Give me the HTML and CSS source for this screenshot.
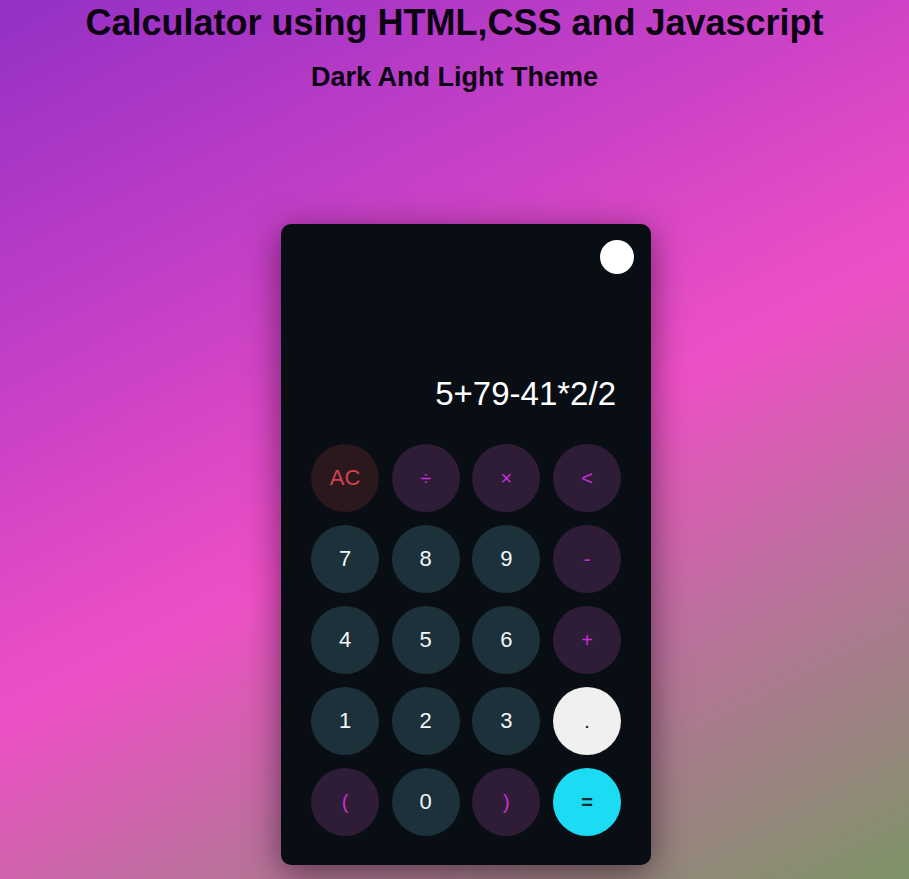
FILE: index.html
```html
<!DOCTYPE html>
<html lang="en">
<head>
<meta charset="UTF-8">
<title>Calculator</title>
<link rel="stylesheet" href="styles.css">
</head>
<body>
<h1 class="title">Calculator using HTML,CSS and Javascript</h1>
<h2 class="subtitle">Dark And Light Theme</h2>
<div class="stage">
  <div class="calc">
    <div class="top">
      <div class="toggle"></div>
    </div>
    <div class="display">5+79-41*2/2</div>
    <div class="keys">
      <div class="key clear">AC</div>
      <div class="key op">÷</div>
      <div class="key op">×</div>
      <div class="key op">&lt;</div>
      <div class="key num">7</div>
      <div class="key num">8</div>
      <div class="key num">9</div>
      <div class="key op">-</div>
      <div class="key num">4</div>
      <div class="key num">5</div>
      <div class="key num">6</div>
      <div class="key op">+</div>
      <div class="key num">1</div>
      <div class="key num">2</div>
      <div class="key num">3</div>
      <div class="key dot">.</div>
      <div class="key op">(</div>
      <div class="key num">0</div>
      <div class="key op">)</div>
      <div class="key eq">=</div>
    </div>
  </div>
</div>
</body>
</html>
```
FILE: styles.css
```css
html, body {
  margin: 0;
  padding: 0;
  height: 100%;
}
body {
  font-family: "Liberation Sans", Arial, sans-serif;
  background: linear-gradient(153deg, #9330c6 0%, #c43fc6 28%, #ee50c6 54%, #b9729a 74%, #7e9468 100%);
  overflow: hidden;
  padding-top: 2px;
  box-sizing: border-box;
}
.title {
  margin: 0;
  text-align: center;
  font-size: 36px;
  line-height: 41px;
  font-weight: bold;
  color: #0c0312;
}
.subtitle {
  margin: 19px 0 0;
  text-align: center;
  font-size: 27px;
  line-height: 31px;
  font-weight: bold;
  color: #0c0312;
}
.stage {
  display: flex;
  justify-content: center;
  margin-top: 131px;
}
.calc {
  margin-left: 23px;
  width: 370px;
  box-sizing: border-box;
  padding: 16px 17px 29px 30px;
  background: #080e13;
  border-radius: 10px;
  box-shadow: 0 8px 35px rgba(20, 0, 20, 0.55);
}
.top {
  display: flex;
  justify-content: flex-end;
}
.toggle {
  width: 34px;
  height: 34px;
  border-radius: 50%;
  background: #ffffff;
}
.display {
  margin-top: 101px;
  padding-right: 18px;
  text-align: right;
  color: #ffffff;
  font-size: 33px;
  line-height: 37px;
}
.keys {
  margin-top: 32px;
  width: 310px;
  display: grid;
  grid-template-columns: repeat(4, 68px);
  grid-auto-rows: 68px;
  justify-content: space-between;
  row-gap: 13px;
}
.key {
  border-radius: 50%;
  display: flex;
  align-items: center;
  justify-content: center;
  font-size: 22px;
}
.num {
  background: #1d313a;
  color: #f4f6f7;
}
.op {
  background: #2f1d38;
  color: #c72fd2;
  font-size: 20px;
}
.clear {
  background: #2b181d;
  color: #d3424f;
}
.dot {
  background: #f0f0f0;
  color: #111;
  font-size: 20px;
}
.eq {
  background: #1cdcf3;
  color: #0d2a33;
  font-size: 20px;
  font-weight: bold;
}
```
